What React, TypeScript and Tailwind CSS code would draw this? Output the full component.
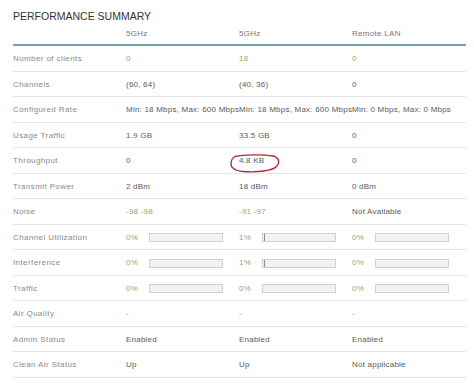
import React from "react";

type Cell = { t: string; green?: boolean; bar?: number };
type Row = { label: string; cells: Cell[] };

const rows: Row[] = [
  { label: "Number of clients", cells: [{ t: "0", green: true }, { t: "18", green: true }, { t: "0", green: true }] },
  { label: "Channels", cells: [{ t: "(60, 64)" }, { t: "(40, 36)" }, { t: "0" }] },
  {
    label: "Configured Rate",
    cells: [{ t: "Min: 18 Mbps, Max: 600 Mbps" }, { t: "Min: 18 Mbps, Max: 600 Mbps" }, { t: "Min: 0 Mbps, Max: 0 Mbps" }],
  },
  { label: "Usage Traffic", cells: [{ t: "1.9 GB" }, { t: "33.5 GB" }, { t: "0" }] },
  { label: "Throughput", cells: [{ t: "0" }, { t: "4.8 KB" }, { t: "0" }] },
  { label: "Transmit Power", cells: [{ t: "2 dBm" }, { t: "18 dBm" }, { t: "0 dBm" }] },
  { label: "Noise", cells: [{ t: "-98 -98", green: true }, { t: "-91 -97", green: true }, { t: "Not Available" }] },
  { label: "Channel Utilization", cells: [{ t: "0%", bar: 0 }, { t: "1%", bar: 1 }, { t: "0%", bar: 0 }] },
  { label: "Interference", cells: [{ t: "0%", bar: 0 }, { t: "1%", bar: 1 }, { t: "0%", bar: 0 }] },
  { label: "Traffic", cells: [{ t: "0%", bar: 0 }, { t: "0%", bar: 0 }, { t: "0%", bar: 0 }] },
  { label: "Air Quality", cells: [{ t: "-", green: true }, { t: "-", green: true }, { t: "-", green: true }] },
  { label: "Admin Status", cells: [{ t: "Enabled" }, { t: "Enabled" }, { t: "Enabled" }] },
  { label: "Clean Air Status", cells: [{ t: "Up" }, { t: "Up" }, { t: "Not applicable" }] },
];

function CellView({ c }: { c: Cell }) {
  if (c.bar !== undefined) {
    return (
      <div className="flex items-center">
        <span className="w-[23px] text-[#9aa56a]">{c.t}</span>
        <div className="relative h-[9px] w-[74px] border border-[#d0d0d0] bg-[#f2f2f2]">
          {c.bar > 0 && <div className="absolute left-[1px] top-0 h-full w-[1px] bg-[#8a8a8a]" />}
        </div>
      </div>
    );
  }
  return (
    <span className={"whitespace-nowrap tracking-[0.22px] " + (c.green ? "text-[#9aa56a]" : "text-[#5a5a5a]")}>{c.t}</span>
  );
}

export default function App() {
  return (
    <div className="relative h-[383px] w-[474px] bg-white" style={{ fontFamily: '"Liberation Sans", Arial, sans-serif' }}>
      <div className="pl-[13px] pt-[10px]">
        <h2 className="text-[10.5px] leading-[12px] text-[#333333]">PERFORMANCE SUMMARY</h2>
        <div className="grid h-[24px] w-[453px] grid-cols-[113px_113px_113px_114px] items-center border-b-2 border-[#6aa7af] pt-[2px] text-[8px] tracking-[0.3px] text-[#777777]">
          <span />
          <span>5GHz</span>
          <span>5GHz</span>
          <span>Remote LAN</span>
        </div>
        {rows.map((r) => (
          <div
            key={r.label}
            className="grid h-[25.5px] w-[453px] grid-cols-[113px_113px_113px_114px] items-center border-b border-[#e6e6e6] pt-[2px] text-[8px] tracking-[0.3px]"
          >
            <span className="whitespace-nowrap tracking-[0.4px] text-[#8a8a8a]">{r.label}</span>
            {r.cells.map((c, i) => (
              <CellView key={i} c={c} />
            ))}
          </div>
        ))}
      </div>
      <svg className="absolute left-[229px] top-[153px]" width="52" height="21" viewBox="0 0 52 21" fill="none">
        <path
          d="M6 3.5 C 14 1.5, 34 1.2, 44 3 C 50 4.5, 51 9, 48 13 C 44 18, 28 19.5, 14 18.5 C 5 17.8, 1.5 14, 2 10 C 2.3 7, 3 5, 6 3.5"
          stroke="#b02a33"
          strokeWidth="1.3"
        />
      </svg>
    </div>
  );
}
